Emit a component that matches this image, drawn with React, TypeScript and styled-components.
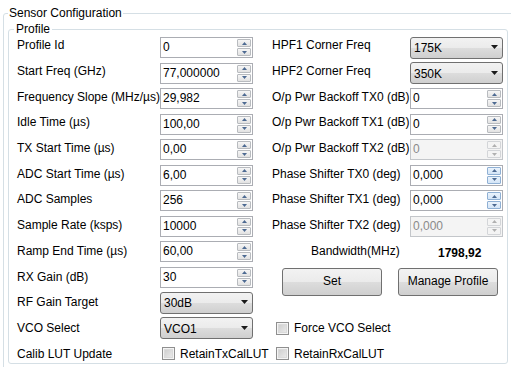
import React from "react";
import styled, { createGlobalStyle } from "styled-components";

const GlobalStyle = createGlobalStyle`
  html, body { margin: 0; padding: 0; background: #ffffff; overflow: hidden; }
  body { font-family: "Liberation Sans", Arial, sans-serif; font-size: 12px; color: #000000; }
  * { box-sizing: border-box; }
`;

const Page = styled.div`
  width: 511px;
  height: 367px;
  overflow: hidden;
  padding: 6px 0 0 3px;
`;

const OuterGroup = styled.fieldset`
  margin: 0;
  width: 540px;
  height: 400px;
  min-width: 0;
  border: 1px solid #d5dfe5;
  border-radius: 3px;
  padding: 0 0 0 4px;
`;

const GroupTitle = styled.legend<{ $shift: number }>`
  padding: 0 ${(p) => (p.$shift < 0 ? 2 : 1)}px;
  margin-left: ${(p) => p.$shift}px;
  line-height: 14px;
  font-size: 12px;
  color: #000000;
`;

const ProfileGroup = styled.fieldset`
  margin: 2px 0 0 0;
  width: 500px;
  height: 342px;
  min-width: 0;
  border: 1px solid #d5dfe5;
  border-radius: 3px;
  padding: 0 0 0 8px;
`;

const FormGrid = styled.div`
  display: grid;
  grid-template-columns: 143px 93px 157px 93px;
  grid-auto-rows: 25.5px;
  align-items: center;
  margin-top: -1px;
`;

const FieldLabel = styled.span<{ $lift: number; $indent?: number }>`
  white-space: nowrap;
  line-height: 14px;
  margin-bottom: ${(p) => p.$lift * 2}px;
  padding-left: ${(p) => p.$indent ?? 0}px;
`;

const SpinBox = styled.div<{ $disabled?: boolean }>`
  display: flex;
  align-items: stretch;
  height: 21px;
  border: 1px solid ${(p) => (p.$disabled ? "#c3c6ca" : "#abadb3")};
  background: ${(p) => (p.$disabled ? "#f4f4f4" : "#ffffff")};
  color: ${(p) => (p.$disabled ? "#8a8a8a" : "#000000")};
`;

const SpinValue = styled.span`
  flex: 1;
  padding-left: 2px;
  line-height: 19px;
  white-space: nowrap;
  overflow: hidden;
`;

const SpinButtons = styled.div`
  display: flex;
  flex-direction: column;
  gap: 1px;
  width: 15px;
  padding: 1px 1px 1px 0;
`;

const SpinButton = styled.div<{ $accent?: boolean; $disabled?: boolean }>`
  flex: 1;
  display: flex;
  align-items: center;
  justify-content: center;
  border: 1px solid ${(p) => (p.$accent ? "#8fb0d4" : p.$disabled ? "#d3d5d8" : "#b8bbbf")};
  border-radius: 1px;
  background: ${(p) =>
    p.$accent
      ? "linear-gradient(#eaf3fc, #d4e5f7)"
      : p.$disabled
      ? "#f4f4f4"
      : "linear-gradient(#f6f6f6, #e2e2e2)"};
`;

const Combo = styled.div`
  display: flex;
  align-items: center;
  justify-content: space-between;
  height: 22px;
  padding: 0 4px 1px 3px;
  border: 1px solid #707070;
  border-radius: 3px;
  background: linear-gradient(#f2f2f2 0%, #ebebeb 50%, #dddddd 50%, #cfcfcf 100%);
  white-space: nowrap;
`;

const ComboText = styled.span`
  line-height: 14px;
  padding-top: 2px;
`;

const BandLabel = styled.span`
  padding-left: 58px;
  white-space: nowrap;
  margin-bottom: 1px;
`;

const BandValue = styled.span`
  padding-left: 28px;
  font-weight: bold;
  white-space: nowrap;
  margin-top: 2px;
`;

const ButtonBar = styled.div`
  grid-column: 3 / span 2;
  grid-row: span 2;
  align-self: start;
  display: flex;
  gap: 16px;
  padding-left: 29px;
  margin-top: 3px;
`;

const PushButton = styled.button`
  width: 100px;
  height: 28px;
  padding: 0 0 1px 0;
  border: 1px solid #707070;
  border-radius: 3px;
  background: linear-gradient(#f2f2f2 0%, #ebebeb 50%, #dddddd 50%, #cfcfcf 100%);
  font-family: "Liberation Sans", Arial, sans-serif;
  font-size: 12px;
  color: #000000;
`;

const CheckField = styled.label<{ $indent: number; $wide?: boolean }>`
  display: flex;
  align-items: center;
  gap: 5px;
  padding-left: ${(p) => p.$indent}px;
  white-space: nowrap;
  ${(p) => (p.$wide ? "grid-column: 3 / span 2;" : "")}
`;

const CheckBox = styled.span`
  flex: none;
  width: 13px;
  height: 13px;
  border: 1px solid #8f8f8f;
  background: linear-gradient(135deg, #c9c9c9, #efefef);
  box-shadow: inset 0 0 0 1px #f4f4f4, inset 0 0 0 2px #dadada;
`;

const CheckText = styled.span`
  line-height: 14px;
`;

function SpinArrow({ up, color }: { up: boolean; color: string }) {
  return (
    <svg width="5" height="3" viewBox="0 0 5 3">
      <path d={up ? "M2.5 0 L5 3 L0 3 Z" : "M0 0 L5 0 L2.5 3 Z"} fill={color} />
    </svg>
  );
}

function Spin({ value, disabled, accent }: { value: string; disabled?: boolean; accent?: boolean }) {
  const color = disabled ? "#b0b0b0" : "#4d6a92";
  return (
    <SpinBox $disabled={disabled}>
      <SpinValue>{value}</SpinValue>
      <SpinButtons>
        <SpinButton $accent={accent} $disabled={disabled}>
          <SpinArrow up color={color} />
        </SpinButton>
        <SpinButton $accent={accent} $disabled={disabled}>
          <SpinArrow up={false} color={color} />
        </SpinButton>
      </SpinButtons>
    </SpinBox>
  );
}

function Select({ value }: { value: string }) {
  return (
    <Combo>
      <ComboText>{value}</ComboText>
      <svg width="7" height="4" viewBox="0 0 7 4">
        <path d="M0 0 L7 0 L3.5 4 Z" fill="#1a1a1a" />
      </svg>
    </Combo>
  );
}

function Check({ label, indent, wide }: { label: string; indent: number; wide?: boolean }) {
  return (
    <CheckField $indent={indent} $wide={wide}>
      <CheckBox />
      <CheckText>{label}</CheckText>
    </CheckField>
  );
}

const leftSpins: [string, string][] = [
  ["Profile Id", "0"],
  ["Start Freq (GHz)", "77,000000"],
  ["Frequency Slope (MHz/µs)", "29,982"],
  ["Idle Time (µs)", "100,00"],
  ["TX Start Time (µs)", "0,00"],
  ["ADC Start Time (µs)", "6,00"],
  ["ADC Samples", "256"],
  ["Sample Rate (ksps)", "10000"],
  ["Ramp End Time (µs)", "60,00"],
  ["RX Gain (dB)", "30"],
];

type RightRow = { label: string; field: React.ReactNode };

const rightRows: RightRow[] = [
  { label: "HPF1 Corner Freq", field: <Select value="175K" /> },
  { label: "HPF2 Corner Freq", field: <Select value="350K" /> },
  { label: "O/p Pwr Backoff TX0 (dB)", field: <Spin value="0" /> },
  { label: "O/p Pwr Backoff TX1 (dB)", field: <Spin value="0" /> },
  { label: "O/p Pwr Backoff TX2 (dB)", field: <Spin value="0" disabled /> },
  { label: "Phase Shifter TX0 (deg)", field: <Spin value="0,000" accent /> },
  { label: "Phase Shifter TX1 (deg)", field: <Spin value="0,000" accent /> },
  { label: "Phase Shifter TX2 (deg)", field: <Spin value="0,000" disabled /> },
];

const lift = (row: number) => Math.round(((12 - row) / 12) * 2.5 * 2) / 2;

export default function App() {
  return (
    <>
      <GlobalStyle />
      <Page>
        <OuterGroup>
          <GroupTitle $shift={0}>Sensor Configuration</GroupTitle>
          <ProfileGroup>
            <GroupTitle $shift={-3}>Profile</GroupTitle>
            <FormGrid>
              {leftSpins.map(([label, value], i) => (
                <React.Fragment key={label}>
                  <FieldLabel $lift={lift(i)}>{label}</FieldLabel>
                  <Spin value={value} />
                  {i < 8 && (
                    <>
                      <FieldLabel $lift={lift(i)} $indent={19}>
                        {rightRows[i].label}
                      </FieldLabel>
                      {rightRows[i].field}
                    </>
                  )}
                  {i === 8 && (
                    <>
                      <BandLabel>Bandwidth(MHz)</BandLabel>
                      <BandValue>1798,92</BandValue>
                    </>
                  )}
                  {i === 9 && (
                    <ButtonBar>
                      <PushButton>Set</PushButton>
                      <PushButton>Manage Profile</PushButton>
                    </ButtonBar>
                  )}
                </React.Fragment>
              ))}
              <FieldLabel $lift={lift(10)}>RF Gain Target</FieldLabel>
              <Select value="30dB" />
              <FieldLabel $lift={lift(11)}>VCO Select</FieldLabel>
              <Select value="VCO1" />
              <Check label="Force VCO Select" indent={23} wide />
              <FieldLabel $lift={0}>Calib LUT Update</FieldLabel>
              <Check label="RetainTxCalLUT" indent={2} />
              <Check label="RetainRxCalLUT" indent={23} wide />
            </FormGrid>
          </ProfileGroup>
        </OuterGroup>
      </Page>
    </>
  );
}
